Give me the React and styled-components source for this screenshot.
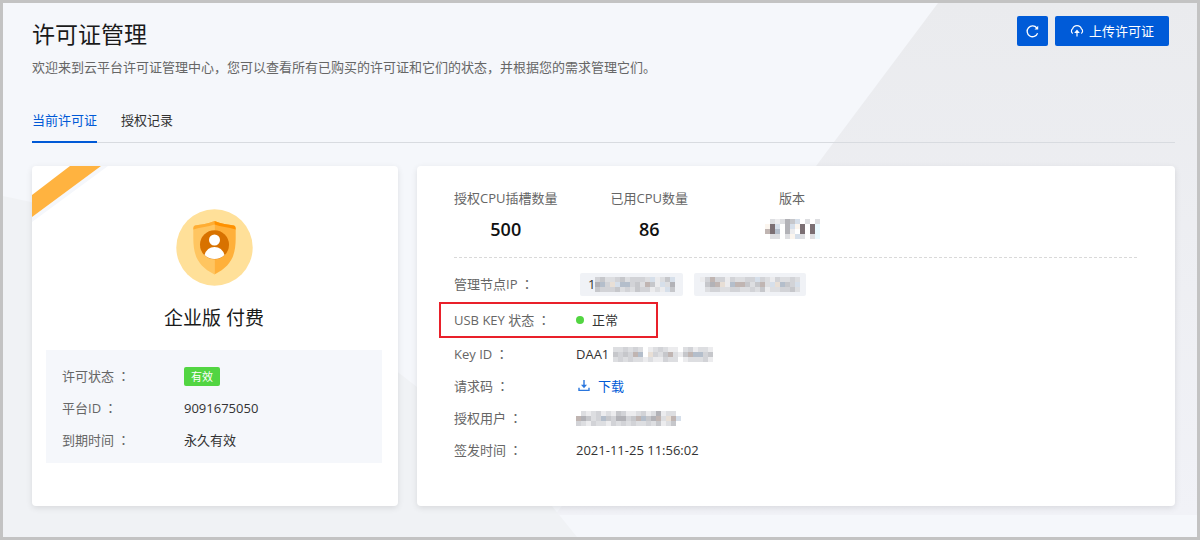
import React from 'react';
import styled, { createGlobalStyle } from 'styled-components';

const GlobalStyle = createGlobalStyle`
  * {
    box-sizing: border-box;
  }
  body {
    margin: 0;
    font-family: 'Open Sans', 'Noto Sans CJK SC', sans-serif;
    font-size: 13px;
    line-height: 20px;
    color: #333;
  }
  h1, h2, p, dl, dd {
    margin: 0;
    font-weight: 400;
  }
`;

const Page = styled.div`
  position: relative;
  min-height: 100vh;
  padding: 13px 22px 28px 29px;
  border: 3px solid #c3c3c3;
  background: #f5f7fb;
  overflow: hidden;
`;

const Backdrop = styled.svg`
  position: absolute;
  top: 0;
  left: 0;
  width: 100%;
  height: 100%;
`;

const Content = styled.div`
  position: relative;
`;

const Header = styled.header`
  display: flex;
  justify-content: space-between;
  align-items: flex-start;
  padding-right: 6px;
`;

const Title = styled.h1`
  padding-top: 2px;
  font-size: 23px;
  line-height: 32px;
  color: #1a1a1a;
`;

const Subtitle = styled.p`
  margin-top: 7px;
  color: #666;
`;

const Actions = styled.div`
  display: flex;
  gap: 7px;
`;

const Button = styled.button`
  display: flex;
  align-items: center;
  justify-content: center;
  gap: 5px;
  height: 30px;
  padding: 0 ${({ $square }) => ($square ? '8px' : '15px')};
  border: 0;
  border-radius: 2px;
  background: #005bd8;
  color: #fff;
  font: inherit;
`;

const Tabs = styled.nav`
  display: flex;
  gap: 24px;
  height: 35px;
  margin-top: 31px;
  border-bottom: 1px solid #d8dbe0;
`;

const Tab = styled.a`
  height: 35px;
  padding-top: 2px;
  border-bottom: 2px solid ${({ $active }) => ($active ? '#0059d6' : 'transparent')};
  color: ${({ $active }) => ($active ? '#0059d6' : '#333')};
  text-decoration: none;
`;

const Cards = styled.main`
  display: grid;
  grid-template-columns: 366fr 758fr;
  gap: 19px;
  margin-top: 23px;
`;

const Card = styled.section`
  position: relative;
  min-height: 340px;
  border-radius: 4px;
  background: #fff;
  box-shadow: 0 2px 6px rgba(0, 0, 0, 0.1);
  overflow: hidden;
`;

const Summary = styled(Card)`
  display: flex;
  flex-direction: column;
  align-items: center;
  padding: 43px 16px 43px 14px;
`;

const Detail = styled(Card)`
  padding: 22px 38px 22px 37px;
`;

const Ribbon = styled.svg`
  position: absolute;
  top: 0;
  left: 0;
`;

const Edition = styled.h2`
  margin: 18px 0 18px;
  font-size: 19px;
  line-height: 28px;
  color: #1a1a1a;
`;

const InfoBox = styled.dl`
  display: grid;
  grid-template-columns: 122px 1fr;
  row-gap: 12px;
  width: 100%;
  padding: 16px 16px 13px;
  background: #f5f7fb;
`;

const Label = styled.dt`
  color: #666;
`;

/* the TC face centres the full-width colon in its box */
const Colon = styled.span`
  margin-left: 3px;
  font-family: 'Noto Sans CJK TC', sans-serif;
  line-height: 1;
`;

const Tag = styled.span`
  display: inline-block;
  padding: 0 7px;
  border-radius: 2px;
  background: #52d542;
  color: #fff;
  font-size: 11px;
  line-height: 19px;
`;

const Stats = styled.dl`
  display: flex;
  gap: 53px;
  padding-bottom: 15px;
  border-bottom: 1px dashed #d9d9d9;
`;

const Stat = styled.div`
  display: flex;
  flex-direction: column;
  align-items: center;
  gap: 8px;
  min-width: ${({ $wide }) => ($wide ? '102px' : '0')};
`;

const StatValue = styled.dd`
  display: flex;
  align-items: center;
  height: 26px;
  font-size: 18px;
  font-weight: 600;
  line-height: 26px;
  color: #111;
`;

const Rows = styled.dl`
  padding-top: 10px;
`;

const Row = styled.div`
  display: grid;
  grid-template-columns: 122px 1fr;
  align-items: center;
  width: ${({ $framed }) => ($framed ? '219px' : 'auto')};
  height: ${({ $framed }) => ($framed ? '36px' : '32px')};
  margin: ${({ $framed }) => ($framed ? '2px 0 0 -15px' : '0')};
  padding-left: ${({ $framed }) => ($framed ? '13px' : '0')};
  border: ${({ $framed }) => ($framed ? '2px solid #e9202a' : '0')};
`;

const Value = styled.dd`
  display: flex;
  align-items: center;
  gap: ${({ $gap }) => $gap || 0}px;
  padding-left: ${({ $inset }) => $inset || 0}px;
`;

const Chip = styled.span`
  display: flex;
  align-items: center;
  height: 23px;
  padding: 0 ${({ $pad }) => $pad}px;
  border-radius: 2px;
  background: #f0f2f6;
`;

const Dot = styled.i`
  width: 8px;
  height: 8px;
  border-radius: 50%;
  background: #52d542;
`;

const Download = styled.a`
  display: flex;
  align-items: center;
  gap: 7px;
  color: #0059d6;
  text-decoration: none;
`;

const RefreshIcon = () => (
  <svg width="15" height="15" viewBox="0 0 15 15" fill="none" stroke="#fff" strokeWidth="1.3">
    <path d="M12.6 9.3A5.4 5.4 0 1 1 11.8 4" />
    <path d="M13.2 1.8v3.7H9.5z" fill="#fff" stroke="none" />
  </svg>
);

const UploadIcon = () => (
  <svg width="14" height="14" viewBox="0 0 14 14" fill="none" stroke="#fff" strokeWidth="1.2">
    <path d="M2.8 9.4A2.7 2.7 0 0 1 2.6 4.8 4.6 4.6 0 0 1 11.4 4.8 2.7 2.7 0 0 1 11.2 9.4" />
    <path d="M7 12.5V7" />
    <path d="M7 5.4L9.8 9H4.2z" fill="#fff" stroke="none" />
  </svg>
);

const DownloadIcon = () => (
  <svg width="15" height="14" viewBox="0 0 15 14" fill="none" stroke="#2a76dd" strokeWidth="1.4">
    <path d="M8 1V7" />
    <path d="M8 9.2L5 5.8H11z" fill="#2a76dd" stroke="none" />
    <path d="M3 8.8V11.4H13V8.8" />
  </svg>
);

const Shield = () => (
  <svg width="77" height="77" viewBox="0 0 77 77">
    <circle cx="38.5" cy="38.5" r="38.2" fill="#ffe099" />
    <path d="M38.5 12C32 15 25 15.5 19 16.5Q17.3 17 17.3 19V29C17.3 47 22 57 38.5 65.5Z" fill="#ffc560" />
    <path d="M38.5 12C45 15 52 15.5 58 16.5Q59.7 17 59.7 19V29C59.7 47 55 57 38.5 65.5Z" fill="#ffb03a" />
    <path d="M38.5 12C32 15 25 15.5 19 16.5Q17.3 17 17.3 20.5C25 18 32 18 38.5 15.5Z" fill="#ffad33" />
    <path d="M38.5 12C45 15 52 15.5 58 16.5Q59.7 17 59.7 20.5C52 18 45 18 38.5 15.5Z" fill="#ff9100" />
    <circle cx="38.5" cy="35.8" r="14.5" fill="#d87200" />
    <circle cx="38.5" cy="31" r="5.5" fill="#fff" />
    <path d="M28.5 46Q31 38 38.5 38T48.5 46A14.5 14.5 0 0 1 28.5 46Z" fill="#fff" />
  </svg>
);

const SHADES = {
  a: '#ececee',
  b: '#dddee1',
  c: '#d2d3d7',
  d: '#c6c7cb',
  e: '#b2b2b7',
  f: '#d6dfea',
  g: '#e8dfd6',
  h: '#b4becb',
  i: '#c0b5b2',
  j: '#7b6f73',
  k: '#fbf5ee',
  l: '#eafaff',
};

const MASKS = {
  version: ['.babedf.b.b', 'kjf.efkj.jl', 'ijh.ea.j.jl', '.bb.bkfb.bl'],
  ip1: ['cdbbcdbcccbfabdf', 'ehcgfhhcdbidafbe', 'dcccdbcbdccabafd'],
  ip2: ['aciccacbbccfcbacbbcb', '.deigahiidbdibfghdcf', '.bccbbccbbcbdabbccdb'],
  key: ['bbcbcb.abcbaa.bcabba', 'dcdcih.gcbdibadihhcd', 'bcbcbbabaacbb.abbbca'],
  user: ['.babcabadcaabcabeabb.', 'iedbchdceecdihdeibgif', 'cbacbbacbcbcbbcbdabd.'],
};

// One 5px square for each letter, which is a key of SHADES
const Mosaic = ({ mask }) => {
  const rows = MASKS[mask];
  const width = rows[0].length * 5;
  const height = rows.length * 5;
  return (
    <svg width={width} height={height} role="img" aria-label="已隐藏" shapeRendering="crispEdges">
      {rows.map((row, y) =>
        [...row].map((shade, x) =>
          SHADES[shade] ? (
            <rect key={`${x}-${y}`} x={x * 5} y={y * 5} width="5" height="5" fill={SHADES[shade]} />
          ) : null
        )
      )}
    </svg>
  );
};

const Name = ({ children }) => (
  <Label>
    {children}
    <Colon>：</Colon>
  </Label>
);

export default function App() {
  return (
    <>
      <GlobalStyle />
      <Page>
        <Backdrop viewBox="0 0 1194 534" preserveAspectRatio="none" aria-hidden="true">
          <defs>
            <linearGradient id="haze" x1="0" y1="0" x2="0" y2="1">
              <stop offset="0" stopColor="#eaebee" />
              <stop offset="1" stopColor="#f1f2f7" />
            </linearGradient>
          </defs>
          <path d="M935 0H1194V512H552Z" fill="url(#haze)" />
          <path d="M0 193L28 199Q250 260 396 370L414 384L549 503L574 534H0Z" fill="#f0f2f5" />
        </Backdrop>
        <Content>
          <Header>
            <div>
              <Title>许可证管理</Title>
              <Subtitle>欢迎来到云平台许可证管理中心，您可以查看所有已购买的许可证和它们的状态，并根据您的需求管理它们。</Subtitle>
            </div>
            <Actions>
              <Button $square aria-label="刷新"><RefreshIcon /></Button>
              <Button><UploadIcon />上传许可证</Button>
            </Actions>
          </Header>
          <Tabs>
            <Tab href="#current" $active>当前许可证</Tab>
            <Tab href="#records">授权记录</Tab>
          </Tabs>
          <Cards>
            <Summary>
              <Ribbon width="96" height="57" viewBox="0 0 96 57">
                <path d="M0 51L69 0H76L0 56Z" fill="#f5f7fb" />
                <path d="M0 29L38 0H69L0 51Z" fill="#ffb340" />
              </Ribbon>
              <Shield />
              <Edition>企业版 付费</Edition>
              <InfoBox>
                <Name>许可状态</Name><dd><Tag>有效</Tag></dd>
                <Name>平台ID</Name><dd>9091675050</dd>
                <Name>到期时间</Name><dd>永久有效</dd>
              </InfoBox>
            </Summary>
            <Detail>
              <Stats>
                <Stat><Label>授权CPU插槽数量</Label><StatValue>500</StatValue></Stat>
                <Stat><Label>已用CPU数量</Label><StatValue>86</StatValue></Stat>
                <Stat $wide><Label>版本</Label><StatValue><Mosaic mask="version" /></StatValue></Stat>
              </Stats>
              <Rows>
                <Row>
                  <Name>管理节点IP</Name>
                  <Value $gap={11} $inset={4}>
                    <Chip $pad={8}>1<Mosaic mask="ip1" /></Chip>
                    <Chip $pad={6}><Mosaic mask="ip2" /></Chip>
                  </Value>
                </Row>
                <Row $framed><Name>USB KEY 状态</Name><Value $gap={8}><Dot />正常</Value></Row>
                <Row><Name>Key ID</Name><Value $gap={4}>DAA1<Mosaic mask="key" /></Value></Row>
                <Row><Name>请求码</Name><Value><Download href="#download"><DownloadIcon />下载</Download></Value></Row>
                <Row><Name>授权用户</Name><Value><Mosaic mask="user" /></Value></Row>
                <Row><Name>签发时间</Name><Value>2021-11-25 11:56:02</Value></Row>
              </Rows>
            </Detail>
          </Cards>
        </Content>
      </Page>
    </>
  );
}
